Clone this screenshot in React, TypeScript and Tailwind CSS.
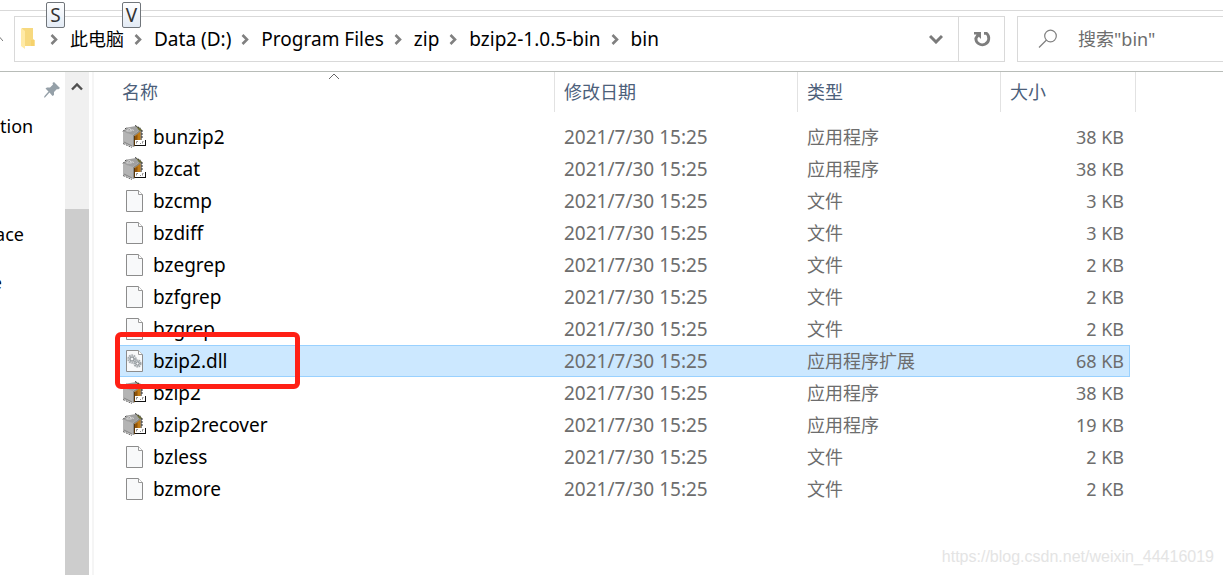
import type { ReactNode } from "react";

type Kind = "app" | "file" | "dll";

interface Entry {
  name: string;
  kind: Kind;
  size: string;
  selected?: boolean;
}

const MODIFIED = "2021/7/30 15:25";

const TYPE_LABEL: Record<Kind, string> = {
  app: "应用程序",
  file: "文件",
  dll: "应用程序扩展",
};

const ENTRIES: Entry[] = [
  { name: "bunzip2", kind: "app", size: "38 KB" },
  { name: "bzcat", kind: "app", size: "38 KB" },
  { name: "bzcmp", kind: "file", size: "3 KB" },
  { name: "bzdiff", kind: "file", size: "3 KB" },
  { name: "bzegrep", kind: "file", size: "2 KB" },
  { name: "bzfgrep", kind: "file", size: "2 KB" },
  { name: "bzgrep", kind: "file", size: "2 KB" },
  { name: "bzip2.dll", kind: "dll", size: "68 KB", selected: true },
  { name: "bzip2", kind: "app", size: "38 KB" },
  { name: "bzip2recover", kind: "app", size: "19 KB" },
  { name: "bzless", kind: "file", size: "2 KB" },
  { name: "bzmore", kind: "file", size: "2 KB" },
];

const CRUMBS = ["此电脑", "Data (D:)", "Program Files", "zip", "bzip2-1.0.5-bin", "bin"];

function AppIcon() {
  return (
    <svg width="25" height="24" viewBox="0 0 25 24" aria-hidden="true">
      <path d="M1 7 11 9V22L1 18Z" fill="#b4b4b4" />
      <path d="M1 7 5 2.500 14 1 19 4 11 10Z" fill="#a0a0a0" />
      <path d="M11 10 19 4 20 5V18L11 22Z" fill="#8a8a88" />
      <path d="M12.500 11 18.500 6.500V17L12.500 21Z" fill="#c07a14" />
      <path d="M13 11.500 15.500 9.500V16L13 17Z" fill="#8d530c" />
      <path d="M12.500 11V21" stroke="#5c3708" />
      <path d="M14 1 19 4 20 6 17 5.500Z" fill="#6c6c30" />
      <path d="M4.500 6 7.500 3 9.500 6ZM9.500 4.500 12 5.500" stroke="#d8d8d8" fill="none" />
      <path d="M2 17 10 21" stroke="#868686" fill="none" />
      <path d="M1 6.500 5 2M13 .5 19 3.500M20 5V14" stroke="#303030" strokeDasharray="2 1" fill="none" />
      <path d="M1 18.500 10 22.500" stroke="#5a5a5a" strokeDasharray="2 1" fill="none" />
      <path d="M13 15H23V20H13Z" fill="#fff" />
      <path d="M13 20.500H24M23.500 15V20" stroke="#111" fill="none" />
      <path d="M14.500 18.500V16.500H16M18 18.500H19M20.500 18.500V16.500H21.500" stroke="#8d8d8d" fill="none" />
    </svg>
  );
}

function FileIcon({ gears = false }: { gears?: boolean }) {
  return (
    <svg width="25" height="24" viewBox="0 0 25 24" aria-hidden="true">
      <g transform="translate(2 0)">
        <path d="M2.500 1.500H14.500L18.500 5.500V22.500H2.500Z" fill="#f8f9fa" stroke="#8c8c8c" />
        <path d="M14.500 1.500V5.500H18.500" fill="#fff" stroke="#9a9a9a" />
        {gears && (
          <g fill="none">
            <circle cx="8" cy="10" r="3.500" stroke="#a9aeb2" strokeWidth="2.400" strokeDasharray="1.6 0.6" />
            <circle cx="8" cy="10" r="2" stroke="#7e858a" />
            <circle cx="13.500" cy="14.500" r="3" stroke="#a0a6aa" strokeWidth="2.200" strokeDasharray="1.5 0.6" />
            <circle cx="13.500" cy="14.500" r="1.600" stroke="#7e858a" />
          </g>
        )}
      </g>
    </svg>
  );
}

function Chevron() {
  return (
    <svg width="8" height="12" viewBox="0 0 8 12" className="shrink-0" aria-hidden="true">
      <path d="M1.500 2 6 6.500 1.500 11" fill="none" stroke="#808080" strokeWidth="2.600" />
    </svg>
  );
}

function FolderIcon() {
  return (
    <svg width="16" height="24" viewBox="0 0 16 24" aria-hidden="true">
      <path d="M2 1H13V12L14.500 13V19H4Z" fill="#f7d97f" />
      <path d="M1 1 5 4V22L1 19Z" fill="#ffeaa6" />
      <path d="M11 13H14.500V19H11Z" fill="#f6d26c" />
    </svg>
  );
}

function KeyTip({ className, children }: { className: string; children: ReactNode }) {
  return (
    <kbd
      className={`absolute -top-[31px] flex h-[26px] w-[19px] items-center justify-center rounded-xs border border-[#70757a] bg-linear-to-b from-white to-[#e3ebf5] font-[Noto_Sans,sans-serif] text-[19px] text-[#333] ${className}`}
    >
      {children}
    </kbd>
  );
}

function AddressBar() {
  return (
    <div className="relative flex h-[46px] min-w-0 flex-1 border border-[#d9d9d9]">
      <nav aria-label="路径" className="flex min-w-0 flex-1 items-center pl-[5px]">
        <FolderIcon />
        <ol className="flex items-center">
          {CRUMBS.map((crumb, i) => (
            <li key={crumb} className="flex items-center whitespace-nowrap">
              <span className={i === 0 ? "relative ml-[14px] flex h-3" : "relative ml-[10px] flex h-3"}>
                <Chevron />
                {i === 0 && <KeyTip className="-left-1">S</KeyTip>}
                {i === 1 && <KeyTip className="-left-3">V</KeyTip>}
              </span>
              <a href="#path" className={i === 0 ? "ml-3" : "ml-3 text-[19px]"}>{crumb}</a>
            </li>
          ))}
        </ol>
      </nav>
      <button type="button" aria-label="展开" className="flex w-11 items-center justify-center">
        <svg width="14" height="10" viewBox="0 0 14 10" aria-hidden="true">
          <path d="M1 2 7 8 13 2" fill="none" stroke="#7a7a7a" strokeWidth="3" />
        </svg>
      </button>
      <button type="button" aria-label="刷新" className="flex w-[46px] items-center justify-center border-l border-[#d9d9d9]">
        <svg width="18" height="18" viewBox="0 0 18 18" aria-hidden="true">
          <path d="M11 3.300H13.500A6.500 6.500 0 1 1 2.800 8" fill="none" stroke="#7d7d7d" strokeWidth="2.800" />
          <path d="M1 2H8V9L5.800 6.800 3.500 9.500 1.400 8 3.500 4.500H1Z" fill="#7d7d7d" />
        </svg>
      </button>
    </div>
  );
}

export default function App() {
  return (
    <div className="relative flex h-screen flex-col overflow-hidden bg-white font-['Noto_Sans','Noto_Sans_CJK_SC',sans-serif] text-[18px] leading-6 text-black">
      <header className="border-b border-[#b8bcb8]">
        <div className="h-[11px] border-b border-[#d9d9d9]" />
        <div className="flex pt-[5px] pb-[9px]">
          <div className="flex w-[14px] items-center overflow-hidden">
            <svg width="3" height="6" viewBox="0 0 3 6" aria-hidden="true">
              <path d="M-2 6 0 1.500 3 5" fill="none" stroke="#777" />
            </svg>
          </div>
          <AddressBar />
          <label className="ml-3 flex h-[46px] w-[206px] items-center border border-r-0 border-[#d9d9d9] pl-5">
            <svg width="20" height="20" viewBox="0 0 20 20" className="shrink-0" aria-hidden="true">
              <circle cx="12.500" cy="7" r="5.800" fill="none" stroke="#808080" strokeWidth="1.200" />
              <path d="M8.500 11 1 18.500" stroke="#808080" strokeWidth="1.300" />
            </svg>
            <input
              type="text"
              aria-label="搜索"
              placeholder={'搜索"bin"'}
              className="ml-5 w-full min-w-0 outline-none placeholder:text-[#6d6d6d]"
            />
          </label>
        </div>
      </header>

      <div className="flex min-h-0 flex-1">
        <aside className="flex w-[65px] shrink-0 flex-col overflow-hidden">
          <div className="flex h-9 items-center justify-end pr-[5px]">
            <svg width="16" height="16" viewBox="0 0 16 16" aria-hidden="true">
              <path d="M10 0 16 6 14 7.500 13 7 10 10 10 13 8.500 14 5.500 10.500 1 15.500 0 15.500 0.500 14 4.500 9.500 1.500 6.500 3 5.500 6 5.500 9 2.500 8.500 1Z" fill="#95a0a8" />
            </svg>
          </div>
          <div className="flex h-9 items-center">tion</div>
          <div className="mt-[72px] flex h-9 w-6 items-center justify-end">ace</div>
          <div className="mt-3 flex h-9 w-[2px] items-center justify-end">e</div>
        </aside>

        <div className="flex w-6 shrink-0 flex-col bg-[#f0f0f0]">
          <button type="button" aria-label="向上滚动" className="flex h-[29px] items-center justify-center">
            <svg width="12" height="9" viewBox="0 0 12 9" aria-hidden="true">
              <path d="M1 7.500 6 2.500 11 7.500" fill="none" stroke="#505050" strokeWidth="2.400" />
            </svg>
          </button>
          <div className="mt-[108px] flex-1 bg-[#cdcdcd]" />
        </div>
        <div className="w-[5px] shrink-0 border-r-2 border-[#f5f5f5]" />

        <main className="relative min-w-0 flex-1 pl-[23px]">
          <svg width="12" height="7" viewBox="0 0 12 7" className="absolute top-px left-[234px]" aria-hidden="true">
            <path d="M1 6 6 1 11 6" fill="none" stroke="#666" />
          </svg>
          <table className="w-[1019px] table-fixed border-separate border-spacing-0 text-left">
            <colgroup>
              <col className="w-[438px]" />
              <col className="w-[243px]" />
              <col className="w-[203px]" />
              <col className="w-[129px]" />
              <col className="w-[6px]" />
            </colgroup>
            <thead>
              <tr className="h-10 text-[#4c607a]">
                <th className="border-r border-[#e2e2e2] p-0 pl-[5px] font-normal">名称</th>
                <th className="border-r border-[#e2e2e2] p-0 pl-[9px] font-normal">修改日期</th>
                <th className="border-r border-[#e2e2e2] p-0 pl-[9px] font-normal">类型</th>
                <th colSpan={2} className="border-r border-[#e2e2e2] p-0 pl-[9px] font-normal">大小</th>
              </tr>
            </thead>
            <tbody className="before:block before:h-[9px] before:content-['']">
              {ENTRIES.map((e) => {
                const edge = e.selected ? "border-y border-[#99d1ff] bg-[#cce8ff]" : "";
                return (
                  <tr key={e.name} className="h-8 text-[#6d6d6d]">
                    <td className={`relative p-0 pl-[5px] text-[19px] text-black ${edge}`}>
                      <div className="flex items-center gap-[6px]">
                        {e.kind === "app" ? <AppIcon /> : <FileIcon gears={e.kind === "dll"} />}
                        <span>{e.name}</span>
                      </div>
                      {e.selected && (
                        <div className="absolute -top-[14px] -left-[2px] z-10 h-[57px] w-[185px] rounded-md border-5 border-[#ff2015]" />
                      )}
                    </td>
                    <td className={`p-0 pl-[9px] text-[19px] ${edge}`}>{MODIFIED}</td>
                    <td className={`p-0 pl-[9px] ${edge}`}>{TYPE_LABEL[e.kind]}</td>
                    <td className={e.selected ? `border-r p-0 pr-[5px] text-right ${edge}` : "p-0 pr-[6px] text-right"}>{e.size}</td>
                    <td className="p-0" />
                  </tr>
                );
              })}
            </tbody>
          </table>
        </main>
      </div>

      <p className="absolute right-[9px] bottom-[6px] font-['Liberation_Sans',sans-serif] text-[16px] text-[#e4e4e4]">
        https://blog.csdn.net/weixin_44416019
      </p>
    </div>
  );
}
